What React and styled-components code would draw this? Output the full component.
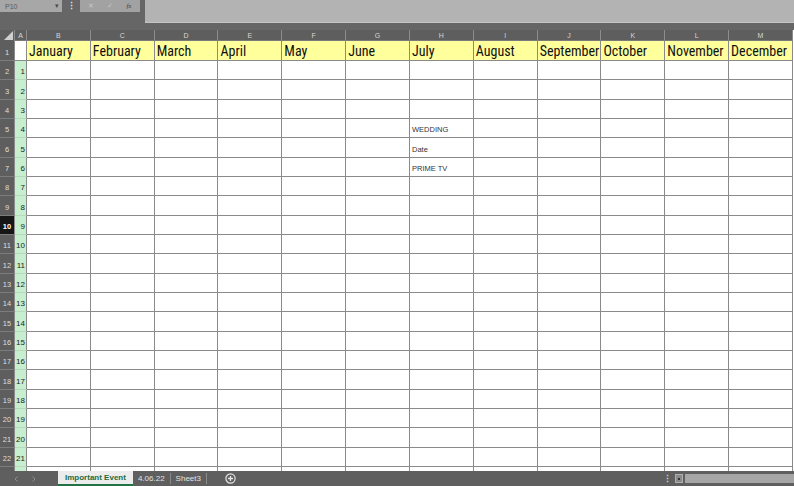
import styled, { createGlobalStyle } from "styled-components";

const GlobalStyle = createGlobalStyle`
  html, body {
    margin: 0;
    padding: 0;
    background: #666666;
    overflow: hidden;
  }
  * {
    box-sizing: border-box;
  }
`;

const COLS = ["B", "C", "D", "E", "F", "G", "H", "I", "J", "K", "L", "M"];
const MONTHS = [
  "January",
  "February",
  "March",
  "April",
  "May",
  "June",
  "July",
  "August",
  "September",
  "October",
  "November",
  "December",
];
const NOTES = { 5: "WEDDING", 6: "Date", 7: "PRIME TV" };
const ROWS = Array.from({ length: 21 }, (_, i) => i + 2);

export default function App() {
  return (
    <Window>
      <GlobalStyle />
      <FormulaBar>
        <NameBox>
          <span>P10</span>
          <Caret>▾</Caret>
        </NameBox>
        <Grip>⋮</Grip>
        <FxPanel>
          <FxIcon>✕</FxIcon>
          <FxIcon>✓</FxIcon>
          <FxIcon $italic>fx</FxIcon>
        </FxPanel>
        <FormulaInput />
      </FormulaBar>

      <Sheet>
        <Corner>
          <svg width="9" height="9" viewBox="0 0 9 9">
            <polygon points="9,0 9,9 0,9" fill="#cfcfcf" />
          </svg>
        </Corner>
        <ColHead>A</ColHead>
        {COLS.map((c) => (
          <ColHead key={c}>{c}</ColHead>
        ))}

        <RowHead>1</RowHead>
        <ACell $blank />
        {MONTHS.map((m) => (
          <MonthCell key={m}>{m}</MonthCell>
        ))}

        {ROWS.map((r) => (
          <Row key={r} r={r} />
        ))}

        {/* row 23 only peeks out above the tab bar */}
        <RowHead />
        <ACell />
        {COLS.map((c) => (
          <Cell key={c} />
        ))}
      </Sheet>

      <TabBar>
        <NavArrows>
          <svg width="4" height="6" viewBox="0 0 4 6">
            <path d="M3.5 0.5L1 3l2.5 2.5" fill="none" stroke="#8e8e8e" strokeWidth="1" />
          </svg>
          <svg width="4" height="6" viewBox="0 0 4 6">
            <path d="M0.5 0.5L3 3 0.5 5.5" fill="none" stroke="#8e8e8e" strokeWidth="1" />
          </svg>
        </NavArrows>
        <Tab $active>Important Event</Tab>
        <Tab>4.06.22</Tab>
        <Tab>Sheet3</Tab>
        <AddSheet>
          <svg width="11" height="11" viewBox="0 0 11 11">
            <circle cx="5.5" cy="5.5" r="4.6" fill="none" stroke="#e6e6e6" strokeWidth="1.2" />
            <path d="M5.5 3v5M3 5.5h5" stroke="#e6e6e6" strokeWidth="1.3" />
          </svg>
        </AddSheet>
        <Spacer />
        <Grip $small>⋮</Grip>
        <ScrollButton>
          <i />
        </ScrollButton>
        <ScrollTrack />
      </TabBar>
    </Window>
  );
}

function Row({ r }) {
  return (
    <>
      <RowHead $selected={r === 10}>{r}</RowHead>
      <ACell>{r - 1}</ACell>
      {COLS.map((c) => (
        <Cell key={c}>{c === "H" && NOTES[r] ? NOTES[r] : ""}</Cell>
      ))}
    </>
  );
}

const Window = styled.div`
  width: 794px;
  height: 486px;
  display: flex;
  flex-direction: column;
  background: #666666;
  font-family: "Liberation Sans", Arial, sans-serif;
  overflow: hidden;
`;

const FormulaBar = styled.div`
  height: 30px;
  flex: none;
  display: flex;
  align-items: flex-start;
  background: #666666;
`;

const NameBox = styled.div`
  width: 62px;
  height: 12px;
  background: #a7a7a7;
  display: flex;
  align-items: center;
  justify-content: space-between;
  padding: 0 3px 0 5px;
  font-size: 7px;
  color: #5a5a5a;
`;

const Caret = styled.span`
  font-size: 7px;
  color: #4a4a4a;
`;

const Grip = styled.div`
  width: ${(p) => (p.$small ? "10px" : "18px")};
  height: 12px;
  align-self: ${(p) => (p.$small ? "center" : "auto")};
  display: flex;
  align-items: center;
  justify-content: center;
  color: ${(p) => (p.$small ? "#d0d0d0" : "#e0e0e0")};
  font-size: 9px;
  font-weight: bold;
`;

const FxPanel = styled.div`
  width: 60px;
  height: 12px;
  background: #a2a2a2;
  display: flex;
  align-items: center;
  justify-content: space-around;
  padding: 0 2px;
`;

const FxIcon = styled.span`
  font-size: 7px;
  color: ${(p) => (p.$italic ? "#3e3e3e" : "#c6c6c6")};
  font-style: ${(p) => (p.$italic ? "italic" : "normal")};
  font-family: ${(p) => (p.$italic ? '"Liberation Serif", serif' : "inherit")};
`;

const FormulaInput = styled.div`
  flex: 1;
  height: 23px;
  margin-left: 5px;
  background: #b3b3b3;
  border-bottom: 1px solid #c4c4c4;
`;

const Sheet = styled.div`
  flex: 1;
  min-height: 0;
  overflow: hidden;
  display: grid;
  grid-template-columns: 15px 12px repeat(12, 63.83px);
  grid-template-rows: 11px 20px repeat(22, 19.33px);
  background: #ffffff;
`;

const Corner = styled.div`
  background: #5e5e5e;
  display: flex;
  align-items: flex-end;
  justify-content: flex-end;
  padding: 0 1px 1px 0;
  border-right: 1px solid #8a8a8a;
`;

const ColHead = styled.div`
  background: #5e5e5e;
  color: #d6d6d6;
  font-size: 7px;
  display: flex;
  align-items: center;
  justify-content: center;
  border-right: 1px solid #8c8c8c;
  border-bottom: 1px solid #7a7a7a;
`;

const RowHead = styled.div`
  background: ${(p) => (p.$selected ? "#161616" : "#5e5e5e")};
  color: ${(p) => (p.$selected ? "#ffffff" : "#dedede")};
  font-weight: ${(p) => (p.$selected ? "bold" : "normal")};
  font-size: 7.5px;
  display: flex;
  align-items: flex-end;
  justify-content: center;
  padding-bottom: 3px;
  border-bottom: 1px solid #7c7c7c;
  border-right: 1px solid #8a8a8a;
`;

const ACell = styled.div`
  background: ${(p) => (p.$blank ? "#ffffff" : "#c7efcf")};
  color: #222222;
  font-size: 8px;
  display: flex;
  align-items: flex-end;
  justify-content: flex-end;
  padding: 0 1px 3px 0;
  border-right: 1px solid #8a8a8a;
  border-bottom: 1px solid ${(p) => (p.$blank ? "#8a8a8a" : "#b9d9bf")};
`;

const Cell = styled.div`
  background: #ffffff;
  color: #333333;
  font-size: 7.5px;
  display: flex;
  align-items: flex-end;
  padding: 0 2px 3px;
  border-right: 1px solid #8a8a8a;
  border-bottom: 1px solid #8a8a8a;
  white-space: nowrap;
`;

const MonthCell = styled.div`
  background: #ffff9c;
  color: #111111;
  font-family: "Liberation Sans Narrow", "Roboto Condensed", "Liberation Sans", sans-serif;
  font-size: 14px;
  font-weight: 400;
  display: flex;
  align-items: flex-end;
  padding: 0 2px 1px;
  border-right: 1px solid #8a8a8a;
  border-bottom: 1px solid #8a8a8a;
  white-space: nowrap;
  overflow: hidden;
`;

const TabBar = styled.div`
  height: 15px;
  flex: none;
  display: flex;
  align-items: stretch;
  background: #5f5f5f;
  font-size: 8px;
`;

const NavArrows = styled.div`
  width: 58px;
  display: flex;
  align-items: center;
  gap: 14px;
  padding-left: 14px;
`;

const Tab = styled.div`
  display: flex;
  align-items: center;
  padding: 0 ${(p) => (p.$active ? "7px" : "5px")};
  background: ${(p) => (p.$active ? "#ececec" : "transparent")};
  color: ${(p) => (p.$active ? "#1d6b3b" : "#e2e2e2")};
  font-weight: ${(p) => (p.$active ? "bold" : "normal")};
  border-bottom: ${(p) => (p.$active ? "2px solid #217346" : "none")};
  border-right: ${(p) => (p.$active ? "none" : "1px solid #8a8a8a")};
  margin: ${(p) => (p.$active ? "0" : "2px 0")};
`;

const AddSheet = styled.div`
  width: 48px;
  display: flex;
  align-items: center;
  justify-content: center;
`;

const Spacer = styled.div`
  flex: 1;
`;

const ScrollButton = styled.div`
  width: 8px;
  height: 9px;
  align-self: center;
  margin: 0 2px 0 3px;
  background: #8a8a8a;
  border: 1px solid #b0b0b0;
  display: flex;
  align-items: center;
  justify-content: center;

  i {
    width: 2px;
    height: 2px;
    background: #333333;
  }
`;

const ScrollTrack = styled.div`
  width: 109px;
  height: 9px;
  align-self: center;
  background: #a6a6a6;
`;
